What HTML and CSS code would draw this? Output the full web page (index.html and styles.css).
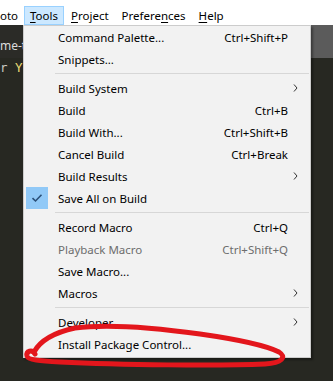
FILE: index.html
```html
<!DOCTYPE html>
<html>
<head>
<meta charset="utf-8">
<link rel="stylesheet" href="styles.css">
</head>
<body>
<div class="app">
  <div class="menubar">
    <span class="mb-item mb-cut">oto</span>
    <span class="mb-item mb-active"><u>T</u>ools</span>
    <span class="mb-item"><u>P</u>roject</span>
    <span class="mb-item">Prefere<u>n</u>ces</span>
    <span class="mb-item"><u>H</u>elp</span>
  </div>
  <div class="workspace">
    <div class="tabbar">
      <div class="tab">me-t</div>
    </div>
    <div class="editor">
      <div class="code"><span class="c-op">r</span> <span class="c-str">Yo</span></div>
    </div>
  </div>

  <div class="menu">
    <div class="mi"><span class="chk"></span><span class="lbl">Command Palette...</span><span class="sc">Ctrl+Shift+P</span><span class="arr"></span></div>
    <div class="mi"><span class="chk"></span><span class="lbl">Snippets...</span><span class="sc"></span><span class="arr"></span></div>
    <div class="sep"></div>
    <div class="mi"><span class="chk"></span><span class="lbl">Build System</span><span class="sc"></span><span class="arr"><svg width="5" height="8" viewBox="0 0 5 8"><path d="M1 0.5 L4 4 L1 7.5" fill="none" stroke="#333" stroke-width="1"/></svg></span></div>
    <div class="mi"><span class="chk"></span><span class="lbl">Build</span><span class="sc">Ctrl+B</span><span class="arr"></span></div>
    <div class="mi"><span class="chk"></span><span class="lbl">Build With...</span><span class="sc">Ctrl+Shift+B</span><span class="arr"></span></div>
    <div class="mi"><span class="chk"></span><span class="lbl">Cancel Build</span><span class="sc">Ctrl+Break</span><span class="arr"></span></div>
    <div class="mi"><span class="chk"></span><span class="lbl">Build Results</span><span class="sc"></span><span class="arr"><svg width="5" height="8" viewBox="0 0 5 8"><path d="M1 0.5 L4 4 L1 7.5" fill="none" stroke="#333" stroke-width="1"/></svg></span></div>
    <div class="mi"><span class="chk on"><svg width="12" height="10" viewBox="0 0 12 10"><path d="M1.5 5.2 L4.5 8 L10.5 1.8" fill="none" stroke="#2a4f78" stroke-width="1.6"/></svg></span><span class="lbl">Save All on Build</span><span class="sc"></span><span class="arr"></span></div>
    <div class="sep"></div>
    <div class="mi"><span class="chk"></span><span class="lbl">Record Macro</span><span class="sc">Ctrl+Q</span><span class="arr"></span></div>
    <div class="mi dis"><span class="chk"></span><span class="lbl">Playback Macro</span><span class="sc">Ctrl+Shift+Q</span><span class="arr"></span></div>
    <div class="mi"><span class="chk"></span><span class="lbl">Save Macro...</span><span class="sc"></span><span class="arr"></span></div>
    <div class="mi"><span class="chk"></span><span class="lbl">Macros</span><span class="sc"></span><span class="arr"><svg width="5" height="8" viewBox="0 0 5 8"><path d="M1 0.5 L4 4 L1 7.5" fill="none" stroke="#333" stroke-width="1"/></svg></span></div>
    <div class="sep"></div>
    <div class="mi"><span class="chk"></span><span class="lbl">Developer</span><span class="sc"></span><span class="arr"><svg width="5" height="8" viewBox="0 0 5 8"><path d="M1 0.5 L4 4 L1 7.5" fill="none" stroke="#333" stroke-width="1"/></svg></span></div>
    <div class="mi"><span class="chk"></span><span class="lbl">Install Package Control...</span><span class="sc"></span><span class="arr"></span></div>
  </div>

  <svg class="scribble" width="333" height="381" viewBox="0 0 333 381">
    <path d="M34 352 C 40 341, 52 333, 75 328 C 105 324, 150 327, 200 334 C 235 339, 265 345, 279 352 C 287 357, 282 363, 265 364 C 220 366, 120 365, 60 362 C 40 361, 28 360, 27 356 C 26 351, 32 349, 35 354"
      fill="none" stroke="#e3161c" stroke-width="5" stroke-linecap="round" stroke-linejoin="round"/>
  </svg>
</div>
</body>
</html>
```

FILE: styles.css
```css
html, body {
  margin: 0;
  padding: 0;
}
body {
  width: 333px;
  height: 381px;
  overflow: hidden;
  background: #272822;
  font-family: "Noto Sans", "Liberation Sans", sans-serif;
  font-size: 11.5px;
}
.app {
  position: relative;
  width: 333px;
  height: 381px;
  display: flex;
  flex-direction: column;
}
.menubar {
  height: 25px;
  background: #ffffff;
  display: flex;
  align-items: flex-end;
  color: #000;
}
.mb-item {
  height: 19px;
  line-height: 18px;
  padding: 0 5px;
  margin-right: 1px;
  box-sizing: border-box;
  border: 1px solid transparent;
}
.mb-item u {
  text-decoration-thickness: 1px;
  text-underline-offset: 2px;
}
.mb-cut {
  margin-left: -6px;
  margin-right: 2px;
  padding-right: 4px;
  width: 28px;
}
.mb-active {
  background: #cce8ff;
  border-color: #99d1ff;
}
.workspace {
  flex: 1;
  display: flex;
  flex-direction: column;
}
.tabbar {
  height: 33px;
  background: #5b5b5b;
  display: flex;
}
.tab {
  width: 110px;
  background: #2b2b27;
  color: #dcdcdc;
  padding-top: 12px;
  box-sizing: border-box;
  font-size: 12px;
}
.editor {
  flex: 1;
  background: #272822;
}
.code {
  font-family: "DejaVu Sans Mono", monospace;
  font-size: 12.5px;
  margin-top: 2px;
  color: #c8c8c0;
}
.c-str {
  color: #e6db74;
}
.menu {
  position: absolute;
  left: 23px;
  top: 25px;
  width: 288px;
  height: 333px;
  box-sizing: border-box;
  background: #f2f2f2;
  border: 1px solid #cccccc;
  box-shadow: 2px 2px 2px rgba(0, 0, 0, 0.35);
  padding: 0 0 3px 0;
  color: #000;
}
.mi {
  height: 22px;
  display: flex;
  align-items: center;
  padding-left: 2px;
}
.chk {
  width: 22px;
  height: 22px;
  margin-right: 10px;
  display: flex;
  align-items: center;
  justify-content: center;
}
.chk.on {
  background: #91c9f7;
}
.lbl {
  flex: 1;
  white-space: nowrap;
}
.sc {
  white-space: nowrap;
}
.arr {
  width: 22px;
  display: flex;
  justify-content: flex-start;
  padding-left: 5px;
  box-sizing: border-box;
}
.dis {
  color: #6d6d6d;
}
.sep {
  height: 1px;
  background: #d7d7d7;
  margin: 3px 1px 3px 31px;
}
.scribble {
  position: absolute;
  left: 0;
  top: 0;
  pointer-events: none;
}
```
